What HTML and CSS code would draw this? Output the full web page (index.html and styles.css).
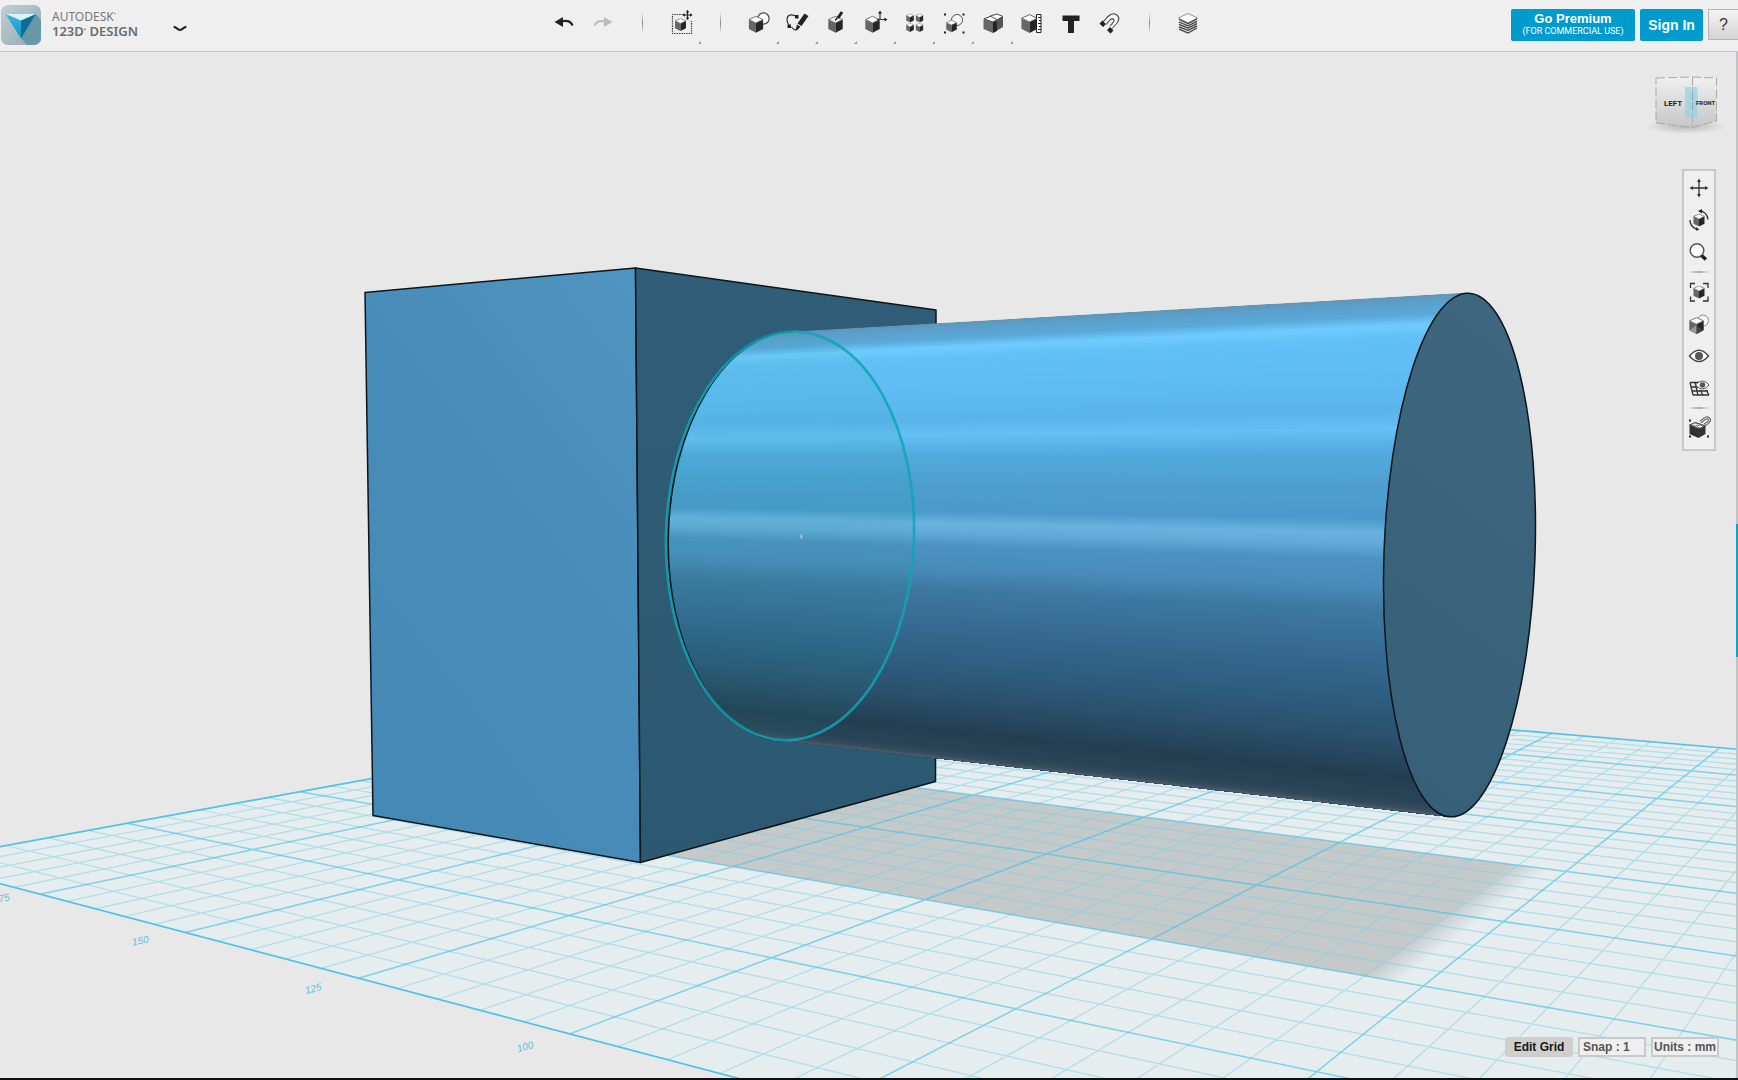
FILE: index.html
```html
<!DOCTYPE html>
<html lang="en">
<head>
<meta charset="utf-8">
<meta name="viewport" content="width=device-width, initial-scale=1">
<title>Autodesk 123D Design</title>
<link rel="stylesheet" href="styles.css">
</head>
<body>
<svg class="defs" aria-hidden="true">
  <defs>
    <linearGradient id="tile" x1="0" y1="0" x2="1" y2="1"><stop offset="0" stop-color="#c3ced4"/><stop offset="1" stop-color="#8fa9b5"/></linearGradient>
    <linearGradient id="tri" x1="0" y1="0" x2="0" y2="1"><stop offset="0" stop-color="#36b5e2"/><stop offset="1" stop-color="#0b95cf"/></linearGradient>
    <symbol id="cube" viewBox="0 0 15 17">
      <path d="M7.500.6 14.500 3.800 7.500 7.200.5 3.800z" fill="#fff" stroke="#555" stroke-width=".8"/>
      <path d="M.3 4 7.500 7.400V17L.3 13.300z" fill="#666"/>
      <path d="M14.700 4 7.500 7.400V17l7.200-3.700z" fill="#252525"/>
    </symbol>
  </defs>
</svg>

<header class="topbar">
  <div class="brand">
    <svg class="logo" viewBox="0 0 40 40" aria-hidden="true">
      <rect width="40" height="40" rx="7" fill="url(#tile)"/>
      <path d="M35 9l5 6v18a7 7 0 0 1-7 7H26l-6-7z" fill="#6797a8"/>
      <path d="M4.500 9H35L20 16z" fill="#d8f3fb"/>
      <path d="M4.500 9 20 15.500V33.500z" fill="url(#tri)"/>
      <path d="M35 9 20 15.500V33.500z" fill="#0c6e93"/>
    </svg>
    <div class="brand-name"><span>AUTODESK<sup>•</sup></span><strong>123D<sup>•</sup> DESIGN</strong></div>
    <button class="plain caret" aria-label="Main menu"><svg viewBox="0 0 14 8"><path d="M1.500 2C3 2.500 5 5 7 5s4-2.500 5.500-3" fill="none" stroke="#222" stroke-width="2.200" stroke-linecap="round"/></svg></button>
  </div>

  <nav class="tools" aria-label="Modelling tools">
    <button class="tool" aria-label="Undo"><svg viewBox="0 0 28 28"><path d="M4.500 14 13 9v10z" fill="#222"/><path d="M11 13.500c6-1.500 10 0 11.500 4" fill="none" stroke="#222" stroke-width="2.200"/></svg></button>
    <button class="tool" aria-label="Redo"><svg viewBox="0 0 28 28"><path d="M23.500 14 15 9v10z" fill="#bbb"/><path d="M17 13.500c-6-1.500-10 0-11.500 4" fill="none" stroke="#bbb" stroke-width="2"/></svg></button>
    <span class="divider"></span>
    <button class="tool more" aria-label="Transform"><svg viewBox="0 0 28 28"><path d="M16 6.500H5.500V25.500H24.500V13" fill="none" stroke="#333" stroke-width="1.200" stroke-dasharray="1.400 1"/><use href="#cube" x="7.500" y="10" width="12" height="13"/><path d="M20.500 2.500v9M16 7h9" stroke="#222" stroke-width="1.200"/><path d="m20.500 2 1.800 2.500h-3.600zm0 10 1.800-2.500h-3.600zM15.500 7l2.500-1.800v3.600zm10 0L23 5.200v3.600z" fill="#222"/></svg></button>
    <span class="divider"></span>
    <button class="tool more" aria-label="Primitives"><svg viewBox="0 0 28 28"><circle cx="18.500" cy="10.500" r="5.600" fill="#fff" stroke="#444" stroke-width="1.200"/><use href="#cube" x="3.500" y="7.500" width="15" height="17.500"/></svg></button>
    <button class="tool more" aria-label="Sketch"><svg viewBox="0 0 28 28"><path d="M13 8.500C7 5.500 3 7 3 11.500c0 3 1.500 5 2.500 7M7.500 19c3 4 6 4 8-1" fill="none" stroke="#333" stroke-width="1.200"/><path d="M3.500 16.500h3.500V20H3.500zM11 7h3.500v3.500H11z" fill="#222"/><path d="m20.500 5.500 4 2.500-7 10-4-2.500z" fill="#222"/><path d="m13 16.500 3.500 2.300-5 3.700z" fill="#222"/></svg></button>
    <button class="tool more" aria-label="Construct"><svg viewBox="0 0 28 28"><use href="#cube" x="5" y="7.500" width="15" height="17.500"/><path d="m19 4-4 6" stroke="#222" stroke-width="3"/><path d="m15 9-3 3.500" stroke="#222" stroke-width="1.500"/></svg></button>
    <button class="tool more" aria-label="Modify"><svg viewBox="0 0 28 28"><use href="#cube" x="3" y="7.500" width="15" height="17.500"/><path d="M18 12V4m-3 7.500h10" fill="none" stroke="#333" stroke-width="1.200"/><path d="m18 2.500 2 3h-4zm7.500 9-3-2v4z" fill="#222"/></svg></button>
    <button class="tool more" aria-label="Pattern"><svg viewBox="0 0 28 28"><use href="#cube" x="5" y="5.500" width="8" height="9"/><use href="#cube" x="14.500" y="5.500" width="8" height="9"/><use href="#cube" x="5" y="15" width="8" height="9"/><use href="#cube" x="14.500" y="15" width="8" height="9"/></svg></button>
    <button class="tool more" aria-label="Grouping"><svg viewBox="0 0 28 28"><circle cx="17" cy="12" r="5.500" fill="#f7f7f7" stroke="#555"/><use href="#cube" x="6" y="11.500" width="11" height="13"/><path d="M4 5.500h2v2H4zm18.500 0h2v2h-2zM4 23.500h2v2H4zm18.500 0h2v2h-2z" fill="#222"/></svg></button>
    <button class="tool more" aria-label="Combine"><svg viewBox="0 0 28 28"><path d="m5 11 8-3.500L18 6l6 2.500L14 14z" fill="#fff" stroke="#444"/><path d="M4.500 11 14 14v11l-9.500-4z" fill="#666"/><path d="m14 14 4-1.500V23l-4 2z" fill="#222"/><path d="m17.500 12 6.500-3.500V19l-6 3.500z" fill="#555"/><path d="m11 8 7 3.500" stroke="#555"/></svg></button>
    <button class="tool" aria-label="Measure"><svg viewBox="0 0 28 28"><use href="#cube" x="3" y="6" width="17" height="19"/><path d="M18.500 6.500h4.500v18h-4.500z" fill="#fff" stroke="#222"/><path d="M20 9.500h3m-2 3h2m-3 3h3m-2 3h2m-3 3h3" stroke="#222"/></svg></button>
    <button class="tool" aria-label="Text"><svg viewBox="0 0 28 28"><path d="M5.500 7.500h17V13H17v12h-6V13H5.500z" fill="#222"/></svg></button>
    <button class="tool" aria-label="Snap"><svg viewBox="0 0 28 28"><path d="M6.500 14.500 12 8.500c6-6 13.500-.5 9.500 6L15 21.500" fill="none" stroke="#444" stroke-width="1.100"/><path d="m10 16.500 4.500-5c2.500-2 4.500 0 3 2.500l-3.500 4" fill="none" stroke="#444" stroke-width="1.100"/><path d="M9 15.500 13 10.500c4-4 9-.5 6.500 4L15 20" fill="none" stroke="#fff" stroke-width="1.500"/><path d="m6.500 12.500 3.500 3.500-3 3-3.500-3.500zM14 19l3.500 3.500-3 3-3.500-3.500z" fill="#222"/></svg></button>
    <span class="divider"></span>
    <button class="tool" aria-label="Material"><svg viewBox="0 0 28 28"><path d="M5 10v11l9 4.500 9-5V10z" fill="#ddd"/><path d="m14 5.500 9.500 4.500-9.500 5-9.500-5z" fill="#fff" stroke="#777" stroke-width=".8"/><path d="m5 11.500 9 4 9-4.500M5 14l9 3.800 9-4.500M5 16.400l9 3.700 9-4.500M5 18.800l9 3.600 9-4.500M5 21.200l9 3.800 9-5" fill="none" stroke="#444" stroke-width="1.300"/></svg></button>
  </nav>

  <div class="account">
    <button class="cta premium"><b>Go Premium</b><small>(FOR COMMERCIAL USE)</small></button>
    <button class="cta signin">Sign In</button>
    <button class="help" aria-label="Help">?</button>
  </div>
</header>

<main class="stage">
  <svg class="scene" viewBox="0 52 1738 1026" preserveAspectRatio="xMidYMid slice" role="img" aria-label="Box joined to a cylinder above the work grid">
    <defs>
      <linearGradient id="fade" gradientUnits="userSpaceOnUse" x1="1436" y1="921" x2="1452" y2="942"><stop offset="0" stop-color="#c4caca"/><stop offset="1" stop-color="#c4caca" stop-opacity="0"/></linearGradient>
      <linearGradient id="boxLeft" x1="1" y1="0" x2=".4" y2="1"><stop offset="0" stop-color="#5094c1"/><stop offset=".5" stop-color="#488db9"/><stop offset="1" stop-color="#458ab5"/></linearGradient>
      <linearGradient id="boxRight" x1="0" y1="0" x2="0" y2="1"><stop offset="0" stop-color="#305d77"/><stop offset="1" stop-color="#2c5971"/></linearGradient>
      <linearGradient id="cap" x1=".6" y1="0" x2=".4" y2="1"><stop offset="0" stop-color="#3e677f"/><stop offset="1" stop-color="#365f78"/></linearGradient>
      <clipPath id="body"><path d="M793 331.500 1467 292.500 1500 400V700L1451 817 786 741A121 204.500 1.800 0 1 793 331.500z"/></clipPath>
    </defs>
    <rect y="52" width="1738" height="1026" fill="#e8e8e8"/>
    <g id="floor"></g>
    <g class="grid-label" text-anchor="middle">
      <text transform="translate(2 902) rotate(-12)">175</text>
      <text transform="translate(141 944) rotate(-12)">150</text>
      <text transform="translate(314 992) rotate(-14)">125</text>
      <text transform="translate(526 1050) rotate(-16)">100</text>
    </g>
    <g stroke="#0c1519" stroke-width="1.500" stroke-linejoin="round">
      <path d="M365 292.500 635.500 268 640.500 862.500 373 815.500z" fill="url(#boxLeft)"/>
      <path d="M635.500 268 936 310 935.500 781.500 640.500 862.500z" fill="url(#boxRight)"/>
    </g>
    <g clip-path="url(#body)">
      <g id="shading"></g>
      <ellipse cx="790" cy="536" rx="124" ry="204.500" transform="rotate(1.800 790 536)" fill="#20a8a0" fill-opacity=".09"/>
    </g>
    <path d="M793 331.500A121 204.500 1.800 0 0 786 741" fill="none" stroke="#0c1519" stroke-width="1.600"/>
    <ellipse cx="790" cy="536" rx="124" ry="204.500" transform="rotate(1.800 790 536)" fill="none" stroke="#0fa5b5" stroke-opacity=".85" stroke-width="2.600"/>
    <ellipse cx="1459.500" cy="555" rx="75.500" ry="262" transform="rotate(2 1459.500 555)" fill="url(#cap)" stroke="#0c1519" stroke-width="1.500"/>
    <ellipse cx="801.500" cy="536.500" rx="1.800" ry="3.200" fill="#8fc0da" stroke="#4f86a4" stroke-width=".8"/>
  </svg>

  <button class="plain viewcube" aria-label="View cube">
    <svg viewBox="0 0 80 62">
      <defs>
        <linearGradient id="vc" x1="0" y1="0" x2="0" y2="1"><stop offset="0" stop-color="#f0f0f0"/><stop offset="1" stop-color="#c6c6c6"/></linearGradient>
        <radialGradient id="vs"><stop offset="0" stop-color="#b5b5b5"/><stop offset="1" stop-color="#b5b5b5" stop-opacity="0"/></radialGradient>
      </defs>
      <ellipse cx="40" cy="52" rx="40" ry="8" fill="url(#vs)"/>
      <path d="M10 4 46.500 3V53.500L10 49zM46.500 3 70.500 4V47L46.500 53.500z" fill="url(#vc)"/>
      <path d="M10 4 46.500 3 70.500 4V47L46.500 53.500 10 49zM46.500 3V53.500" fill="none" stroke="#aaa" stroke-dasharray="9 3"/>
      <rect x="39" y="13" width="12.500" height="31" rx="1" fill="#8fd0e2" fill-opacity=".65"/>
      <path d="M46.500 19v20" stroke="#8fa5ac" stroke-dasharray="7 3"/>
      <text class="face" x="18" y="32">LEFT</text>
      <text class="face front" x="50" y="31">FRONT</text>
    </svg>
  </button>

  <nav class="viewbar" aria-label="View tools">
    <button class="plain" aria-label="Pan"><svg viewBox="0 0 24 24"><path d="M12 4v16M4 12h16" stroke="#333" stroke-width="1.300"/><path d="m12 2.500 2 3.500h-4zm0 19 2-3.500h-4zM2.500 12 6 10v4zm19 0L18 10v4z" fill="#333"/></svg></button>
    <button class="plain" aria-label="Orbit"><svg viewBox="0 0 24 24"><use href="#cube" x="6" y="5.500" width="12" height="13"/><path d="M13 3c4 0 7.500 3.500 8 8.500M3 12c0 5 3 8 7 9.500" fill="none" stroke="#333" stroke-width="1.400"/><path d="m11 3 4-2v4.500zM12.500 22 9 19v3.500z" fill="#222"/></svg></button>
    <button class="plain" aria-label="Zoom"><svg viewBox="0 0 24 24"><circle cx="10" cy="10.500" r="6.800" fill="#fff" stroke="#555" stroke-width="1.500"/><path d="m14.500 15.500 4.500 4" stroke="#222" stroke-width="3.500"/></svg></button>
    <hr>
    <button class="plain" aria-label="Fit"><svg viewBox="0 0 24 24"><use href="#cube" x="6" y="5.500" width="12" height="13"/><path d="M8 3.500H3.500V8M16 3.500h5V8M8 21H3.500v-4.500M16 21h5v-4.500" fill="none" stroke="#333" stroke-width="1.300"/></svg></button>
    <button class="plain" aria-label="Materials and outlines"><svg viewBox="0 0 24 24"><circle cx="16" cy="8.500" r="5.500" fill="#f8f8f8" stroke="#888"/><use href="#cube" x="2" y="5" width="15" height="17"/><path d="m2.500 18.500 7-5.500v9z" fill="#999"/><path d="m9.500 13 6.500 5.500-6.500 3.500z" fill="#444"/></svg></button>
    <button class="plain" aria-label="Show and hide"><svg viewBox="0 0 24 24"><path d="M2.500 12Q12 .500 21.500 12 12 23 2.500 12z" fill="#fff" stroke="#444" stroke-width="1.400"/><circle cx="12" cy="12" r="4" fill="#555"/></svg></button>
    <button class="plain" aria-label="Grid visibility"><svg viewBox="0 0 24 24"><path d="M3 6.500h9M4 11h7m-6 4h16M6 19h16M3 6.500 6 19M8 6.500 11 19m2-5 3 5m3-5 3 5" fill="none" stroke="#333" stroke-width="1.300"/><path d="M8.500 9Q15.500 1 22 9q-6.500 8-13.500 0z" fill="#fff" stroke="#555"/><circle cx="15.500" cy="9" r="2.800" fill="#555"/></svg></button>
    <hr>
    <button class="plain" aria-label="Snap settings"><svg viewBox="0 0 24 24"><path d="m2.500 9 9 3.500V22l-9-4zM11.500 12.500l7-2.500v8l-7 4z" fill="#333"/><path d="m2.500 9 6-2.500L18.500 10l-7 2.500z" fill="#fff" stroke="#333"/><ellipse cx="8" cy="8.500" rx="2.500" ry="1.500" fill="#fff" stroke="#666"/><ellipse cx="13" cy="10.500" rx="2.500" ry="1.500" fill="#fff" stroke="#666"/><path d="M13.500 6 18 2.500c4-2 6 2 3 4L17.500 9" fill="none" stroke="#666" stroke-width="3"/><path d="M13.500 6 18 2.500c4-2 6 2 3 4L17.500 9" fill="none" stroke="#eee"/><path d="M2 3.500h2v2H2zM2 19.500h2v2H2zM20 19.500h2v2h-2z" fill="#222"/></svg></button>
  </nav>

  <div class="gridbar">
    <button class="edit">Edit Grid</button>
    <button class="field">Snap : 1</button>
    <button class="field">Units : mm</button>
  </div>
  <div class="edge"></div>
</main>
<script src="scene.js"></script>
</body>
</html>
```
FILE: styles.css
```css
* { box-sizing: border-box; }

body {
  margin: 0;
  min-height: 100vh;
  display: flex;
  flex-direction: column;
  background: #e8e8e8;
  border-bottom: 2px solid #101010;
  font-family: "Liberation Sans", Arial, sans-serif;
  overflow: hidden;
}

button { font: inherit; margin: 0; cursor: pointer; }
.defs { position: absolute; width: 0; height: 0; }

.plain, .tool {
  padding: 0;
  border: 0;
  background: none;
  display: flex;
  align-items: center;
  justify-content: center;
}

.topbar {
  height: 52px;
  display: grid;
  grid-template-columns: minmax(0, 1fr) auto minmax(0, 1fr);
  background: #efefef;
  border-bottom: 1px solid #c4c4c4;
}

.brand { display: flex; align-items: flex-start; padding: 5px 0 0 1px; }
.logo { width: 40px; height: 40px; }
.brand-name {
  display: flex;
  flex-direction: column;
  width: 121px;
  margin: 5px 0 0 11px;
  font: 12px/14px "Noto Sans", sans-serif;
  color: #777;
}
.brand-name strong { font-size: 13px; font-weight: 600; color: #6c6c6c; }
.brand-name sup { font-size: 6px; line-height: 0; vertical-align: 5px; }
.caret { margin-top: 20px; }
.caret svg { width: 14px; height: 8px; }

.tools { display: flex; margin-left: 14px; }
.tool { position: relative; width: 39px; height: 44px; }
.tool svg { width: 28px; height: 28px; }
.more::after {
  content: "";
  position: absolute;
  right: 0;
  bottom: 0;
  border: solid transparent;
  border-width: 0 0 3px 3px;
  border-bottom-color: #999;
}
.divider {
  width: 39px;
  height: 22px;
  margin-top: 12px;
  background: linear-gradient(#efefef, #888, #efefef) center / 1px 100% no-repeat;
}

.account { display: flex; justify-content: flex-end; align-items: flex-start; gap: 5px; padding-top: 9px; }
.cta {
  height: 32px;
  padding: 0;
  border: 0;
  border-radius: 2px;
  background: #009bcd;
  color: #fff;
  font-size: 14px;
  font-weight: bold;
}
.premium { display: flex; flex-direction: column; align-items: center; width: 124px; padding-top: 3px; }
.premium b { font-size: 13px; line-height: 14px; }
.premium small { font: 9px/11px Roboto, sans-serif; }
.signin { width: 63px; }
.help {
  width: 30px;
  height: 31px;
  padding: 0;
  border: 1px solid #b4b4b4;
  border-right: 0;
  background: linear-gradient(#f4f4f4, #d4d4d4);
  color: #333;
  font-size: 16px;
}

.stage { position: relative; flex: 1; }
.scene { position: absolute; inset: 0; width: 100%; height: 100%; }
.floor-fill { fill: #e5edef; }
.minor { fill: none; stroke: #7dcee4; stroke-opacity: .5; stroke-width: 1.2; }
.major { fill: none; stroke: #4fc0e2; stroke-opacity: .65; stroke-width: 1.5; }
.border { fill: none; stroke: #4fc2e6; stroke-width: 1.7; }
.grid-label { font: italic 10px "Liberation Sans", sans-serif; fill: #5fc0e2; }

.viewcube { position: absolute; top: 22px; right: 12px; }
.viewcube svg { width: 80px; height: 62px; }
.face { font: bold 8px Roboto, sans-serif; fill: #222; }
.front { font-size: 6px; }

.viewbar {
  position: absolute;
  top: 117px;
  right: 22px;
  width: 34px;
  padding: 1px 0 5px;
  border: 2px solid #c9c9c9;
  background: #efefef;
}
.viewbar button { width: 30px; height: 32px; }
.viewbar svg { width: 24px; height: 24px; }
.viewbar hr {
  height: 2px;
  margin: 3px 4px;
  border: 0;
  background: linear-gradient(90deg, #efefef, #aaa, #efefef);
}

.gridbar { position: absolute; right: 19px; bottom: 21px; display: flex; gap: 5px; }
.gridbar button { width: 68px; height: 20px; padding: 0; font-size: 12px; font-weight: bold; white-space: nowrap; }
.edit { border: 0; border-radius: 3px; background: #cfcfcf; color: #181818; }
.gridbar .field { border: 2px solid #c9c9c9; background: #efefef; color: #555; }
.gridbar .field:nth-child(2) { padding-left: 3px; text-align: left; }

.edge {
  position: absolute;
  inset: 0 0 0 auto;
  width: 2px;
  background: linear-gradient(#bcc4c4 0 46%, #0f9fd0 46% 59%, #bcc4c4 59%);
}
```
FILE: scene.js
```js
const NS = 'http://www.w3.org/2000/svg';

function draw(parent, tag, attrs) {
  const node = document.createElementNS(NS, tag);
  for (const key in attrs) node.setAttribute(key, attrs[key]);
  parent.appendChild(node);
}

// Gaussian elimination on an augmented matrix.
function solve(m) {
  const n = m.length;
  for (let c = 0; c < n; c++) {
    let p = c;
    for (let r = c; r < n; r++) if (Math.abs(m[r][c]) > Math.abs(m[p][c])) p = r;
    [m[c], m[p]] = [m[p], m[c]];
    for (let r = 0; r < n; r++) {
      if (r === c) continue;
      const f = m[r][c] / m[c][c];
      for (let k = c; k <= n; k++) m[r][k] -= f * m[c][k];
    }
  }
  return m.map((row, i) => row[n] / row[i]);
}

// Camera: grid squares (u, v) paired with their view positions (x, y).
const anchors = [
  [1, 0, 40, 894.3],
  [0, 2, 300, 791.7],
  [6, 2, 1423.4, 986],
  [6, 8, 1720, 747.7]
];
const rows = [];
for (const [u, v, x, y] of anchors) {
  rows.push([u, v, 1, 0, 0, 0, -u * x, -v * x, x]);
  rows.push([0, 0, 0, u, v, 1, -u * y, -v * y, y]);
}
const h = solve(rows);
function project(u, v) {
  const w = h[6] * u + h[7] * v + 1;
  const x = (h[0] * u + h[1] * v + h[2]) / w;
  const y = (h[3] * u + h[4] * v + h[5]) / w;
  return x.toFixed(1) + ' ' + y.toFixed(1);
}
const quad = (a, b, c, d) => 'M' + project(a, c) + 'L' + project(b, c) + 'L' + project(b, d) + 'L' + project(a, d) + 'z';

const floor = document.getElementById('floor');
const SIZE = 8;
draw(floor, 'path', { class: 'floor-fill', d: quad(0, SIZE, 0, SIZE) });
draw(floor, 'path', { fill: 'url(#fade)', d: quad(2.5, 6.2, 2, 4) });

let minor = '', major = '';
for (let i = 1; i < SIZE * 5; i++) {
  const t = i / 5;
  const lines = 'M' + project(t, 0) + 'L' + project(t, SIZE) + 'M' + project(0, t) + 'L' + project(SIZE, t);
  if (i % 5) minor += lines; else major += lines;
}
draw(floor, 'path', { class: 'minor', d: minor });
draw(floor, 'path', { class: 'major', d: major });
draw(floor, 'path', { class: 'border', d: quad(0, SIZE, 0, SIZE) });

// Cylinder shading: colour stops from the top silhouette to the bottom one.
const stops = [
  [0, 98, 150, 182], [.008, 92, 158, 200], [.035, 90, 168, 218], [.055, 112, 204, 255],
  [.08, 98, 192, 247], [.15, 95, 188, 244], [.22, 91, 180, 236], [.255, 101, 192, 246],
  [.3, 83, 170, 222], [.36, 78, 160, 209], [.43, 75, 153, 203], [.458, 104, 178, 221],
  [.478, 100, 172, 216], [.51, 75, 146, 192], [.56, 74, 140, 186], [.61, 62, 120, 161],
  [.7, 54, 105, 146], [.78, 46, 94, 128], [.85, 43, 82, 110], [.935, 36, 62, 82],
  [.975, 42, 68, 88], [.99, 54, 76, 94], [1, 84, 100, 115]
];
function shade(t) {
  let i = 1;
  while (i < stops.length - 1 && stops[i][0] < t) i++;
  const a = stops[i - 1], b = stops[i];
  const f = Math.min(1, Math.max(0, (t - a[0]) / (b[0] - a[0])));
  return 'rgb(' + [1, 2, 3].map(k => Math.round(a[k] + (b[k] - a[k]) * f)).join() + ')';
}
const shading = document.getElementById('shading');
const X0 = 660, X1 = 1510;
const upperEdge = x => 331.5 - (x - 793) * 39 / 674;
const lowerEdge = x => 741 + (x - 786) * 76 / 665;
const at = (x, t) => x + ' ' + (upperEdge(x) + (lowerEdge(x) - upperEdge(x)) * t).toFixed(2);
const STRIPS = 240;
for (let i = 0; i < STRIPS; i++) {
  const t = i / STRIPS;
  draw(shading, 'path', { fill: shade(t), d: 'M' + at(X0, t) + 'L' + at(X1, t) + 'L' + at(X1, 1.02) + 'L' + at(X0, 1.02) + 'z' });
}
```
